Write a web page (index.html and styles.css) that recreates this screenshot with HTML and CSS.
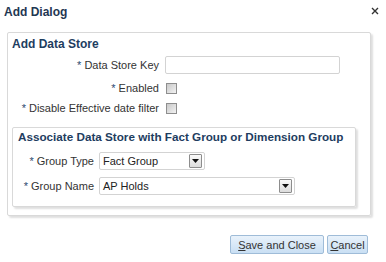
FILE: index.html
```html
<!DOCTYPE html>
<html>
<head>
<meta charset="utf-8">
<link rel="stylesheet" href="styles.css">
</head>
<body>
<div class="dialog">
  <div class="titlebar">
    <span class="title">Add Dialog</span>
    <svg class="close" width="8" height="8" viewBox="0 0 8 8"><path d="M1 1L7 7M7 1L1 7" stroke="#333" stroke-width="1.4"/></svg>
  </div>
  <div class="panel">
    <div class="heading">Add Data Store</div>
    <div class="row row-input">
      <label class="lbl lbl-outer"><span class="req">*</span> Data Store Key</label>
      <span class="textbox"></span>
    </div>
    <div class="row row-check">
      <label class="lbl lbl-outer"><span class="req">*</span> Enabled</label>
      <span class="check"></span>
    </div>
    <div class="row row-check">
      <label class="lbl lbl-outer"><span class="req">*</span> Disable Effective date filter</label>
      <span class="check"></span>
    </div>
    <div class="subpanel">
      <div class="heading sub-heading">Associate Data Store with Fact Group or Dimension Group</div>
      <div class="row row-select first">
        <label class="lbl lbl-inner"><span class="req">*</span> Group Type</label>
        <span class="select select-type"><span class="sel-text">Fact Group</span><span class="drop"><svg width="7" height="4" viewBox="0 0 7 4"><path d="M0 0H7L3.5 4Z" fill="#111"/></svg></span></span>
      </div>
      <div class="row row-select">
        <label class="lbl lbl-inner"><span class="req">*</span> Group Name</label>
        <span class="select select-name"><span class="sel-text">AP Holds</span><span class="drop"><svg width="7" height="4" viewBox="0 0 7 4"><path d="M0 0H7L3.5 4Z" fill="#111"/></svg></span></span>
      </div>
    </div>
  </div>
  <div class="buttons">
    <span class="btn btn-save"><u>S</u>ave and Close</span>
    <span class="btn btn-cancel"><u>C</u>ancel</span>
  </div>
</div>
</body>
</html>
```

FILE: styles.css
```css
html, body {
  margin: 0;
  padding: 0;
  background: #ffffff;
}
body {
  font-family: "Liberation Sans", Arial, sans-serif;
  color: #333333;
  width: 386px;
  height: 262px;
  overflow: hidden;
}
.dialog {
  display: flex;
  flex-direction: column;
}
.titlebar {
  height: 32px;
  display: flex;
  align-items: flex-start;
  justify-content: space-between;
  padding: 0 7px 0 4px;
  box-sizing: border-box;
}
.title {
  font-weight: bold;
  font-size: 12px;
  line-height: 14px;
  margin-top: 5px;
  color: #1f3753;
}
.close {
  margin-top: 7px;
}
.panel {
  margin-left: 7px;
  width: 364px;
  height: 184px;
  box-sizing: border-box;
  border: 1px solid #d9d9d9;
  border-radius: 2px;
  box-shadow: 2px 2px 2px rgba(0,0,0,0.13);
  padding: 4px 0 0 0;
  display: flex;
  flex-direction: column;
}
.heading {
  font-weight: bold;
  font-size: 12px;
  line-height: 14px;
  color: #1e3d5f;
  padding-left: 4px;
}
.row {
  display: flex;
  align-items: center;
  font-size: 11px;
}
.lbl {
  text-align: right;
  flex: none;
  white-space: nowrap;
}
.req {
  color: #2c4a70;
}
.lbl-outer {
  width: 151px;
  margin-right: 6px;
}
.lbl-inner {
  width: 81px;
  margin-right: 5px;
}
.row-input {
  margin-top: 5px;
  height: 18px;
  margin-bottom: 4px;
}
.textbox {
  width: 175px;
  height: 18px;
  box-sizing: border-box;
  border: 1px solid #d3d3d3;
  border-radius: 2px;
  background: #fff;
}
.row-check {
  height: 20px;
}
.check {
  width: 11px;
  height: 11px;
  margin-left: 1px;
  box-sizing: border-box;
  border: 1px solid #8e8e8e;
  background: linear-gradient(135deg, #c9c9c9, #f2f2f2);
}
.subpanel {
  margin: 9px 0 0 4px;
  width: 344px;
  height: 80px;
  box-sizing: border-box;
  border: 1px solid #d9d9d9;
  border-radius: 2px;
  box-shadow: 2px 2px 2px rgba(0,0,0,0.13);
  padding-top: 2px;
}
.sub-heading {
  padding-left: 5px;
  font-size: 11.7px;
}
.row-select {
  height: 18px;
  margin-top: 7px;
}
.row-select.first {
  margin-top: 8px;
}
.select {
  height: 18px;
  box-sizing: border-box;
  border: 1px solid #d3d3d3;
  border-radius: 2px;
  display: flex;
  align-items: center;
  justify-content: space-between;
  padding: 0 2px 0 3px;
  color: #222;
}
.select-type { width: 106px; }
.select-name { width: 196px; }
.drop {
  width: 13px;
  height: 14px;
  box-sizing: border-box;
  border: 1px solid #8d8d8d;
  border-radius: 1px;
  background: linear-gradient(#fafafa, #dcdcdc);
  display: flex;
  align-items: center;
  justify-content: center;
}
.buttons {
  display: flex;
  justify-content: flex-end;
  gap: 3px;
  padding-right: 18px;
  margin-top: 19px;
}
.btn {
  height: 19px;
  box-sizing: border-box;
  border: 1px solid #9fbcd8;
  border-radius: 2px;
  background: linear-gradient(#e9f2fb, #c9dff3);
  font-size: 11px;
  color: #333;
  display: flex;
  align-items: center;
  justify-content: center;
}
.btn u {
  text-decoration-thickness: 1px;
  text-underline-offset: 1px;
}
.btn-save { width: 94px; }
.btn-cancel { width: 41px; }
```
